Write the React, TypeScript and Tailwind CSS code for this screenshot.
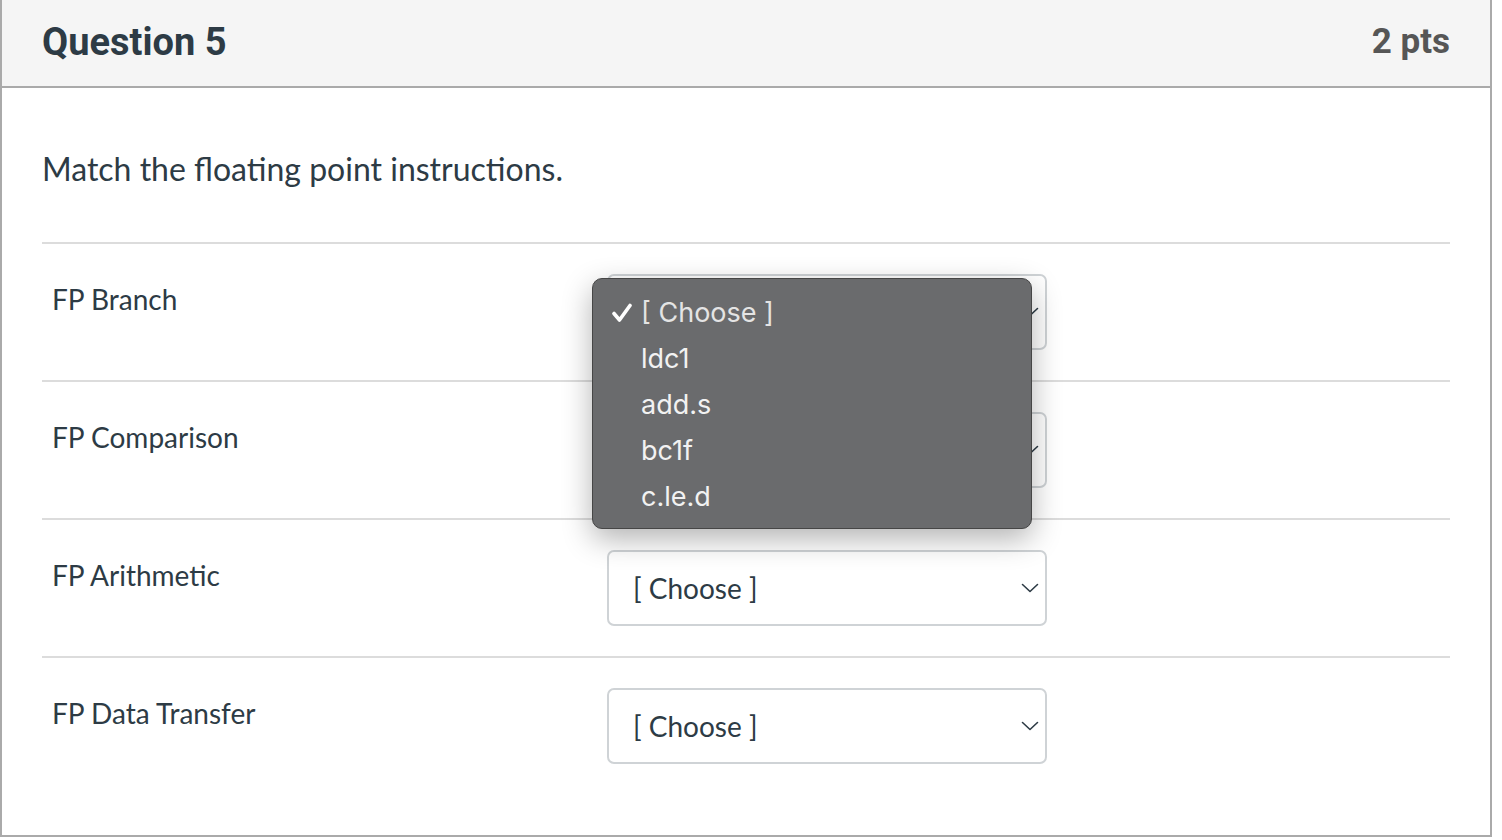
import React from 'react'

const ROWS = ['FP Branch', 'FP Comparison', 'FP Arithmetic', 'FP Data Transfer']
const OPTIONS = ['[ Choose ]', 'ldc1', 'add.s', 'bc1f', 'c.le.d']

function Chevron() {
  return (
    <svg width="18" height="10" viewBox="0 0 18 10" fill="none" className="shrink-0">
      <path d="M1.5 1.5 L9 8.5 L16.5 1.5" stroke="#2d3b45" strokeWidth="1.6" strokeLinecap="round" strokeLinejoin="round" />
    </svg>
  )
}

function FakeSelect() {
  return (
    <div className="flex h-[76px] w-[440px] items-center justify-between rounded-[7px] border-2 border-[#cfd3d6] bg-white pl-[24px] pr-[6px] text-[28px] text-[#2d3b45]">
      <span>[ Choose ]</span>
      <Chevron />
    </div>
  )
}

function OpenMenu() {
  return (
    <div className="absolute left-[-15px] top-[4px] z-10 w-[440px] rounded-[10px] border border-[#464646] bg-[#6a6b6d] pb-[8px] pt-[11px] shadow-[0_10px_30px_rgba(0,0,0,0.3)] font-['Inter',sans-serif]">
      {OPTIONS.map((opt, i) => (
        <div key={opt} className="relative flex h-[46px] items-center pl-[48px] text-[27px] text-[#f2f2f2]">
          {i === 0 && (
            <svg width="22" height="20" viewBox="0 0 22 20" className="absolute left-[18px] top-[13px]" fill="none">
              <path d="M3 10.5 L8.5 17 L19 2.5" stroke="#ffffff" strokeWidth="3.6" strokeLinecap="round" strokeLinejoin="round" />
            </svg>
          )}
          <span className={i === 0 ? 'text-[#e4e4e4]' : ''}>{opt}</span>
        </div>
      ))}
    </div>
  )
}

export default function App() {
  return (
    <div className="h-[840px] w-[1502px] bg-white font-['Lato',sans-serif] text-[#2d3b45]">
      <div className="w-[1492px] border-x-2 border-b-2 border-[#aaaaaa]">
        <div className="flex h-[88px] items-center justify-between border-b-2 border-[#aaaaaa] bg-[#f5f5f5] px-[40px] pb-[2px] font-['Roboto',sans-serif] font-bold">
          <h2 className="text-[38px] text-[#2d3b45]">Question 5</h2>
          <span className="text-[35px] text-[#565656]">2 pts</span>
        </div>
        <div className="px-[40px] pb-[41px] pt-[58px]">
          <p className="mb-[50px] text-[32px] leading-[46px]">Match the floating point instructions.</p>
          {ROWS.map((label, i) => (
            <div key={label} className="flex border-t-2 border-[#dcdcdc] py-[30px]">
              <div className="w-[565px] shrink-0 pl-[10px] pt-[4px] text-[28px] leading-[42px]">{label}</div>
              <div className="relative">
                <FakeSelect />
                {i === 0 && <OpenMenu />}
              </div>
            </div>
          ))}
        </div>
      </div>
    </div>
  )
}
